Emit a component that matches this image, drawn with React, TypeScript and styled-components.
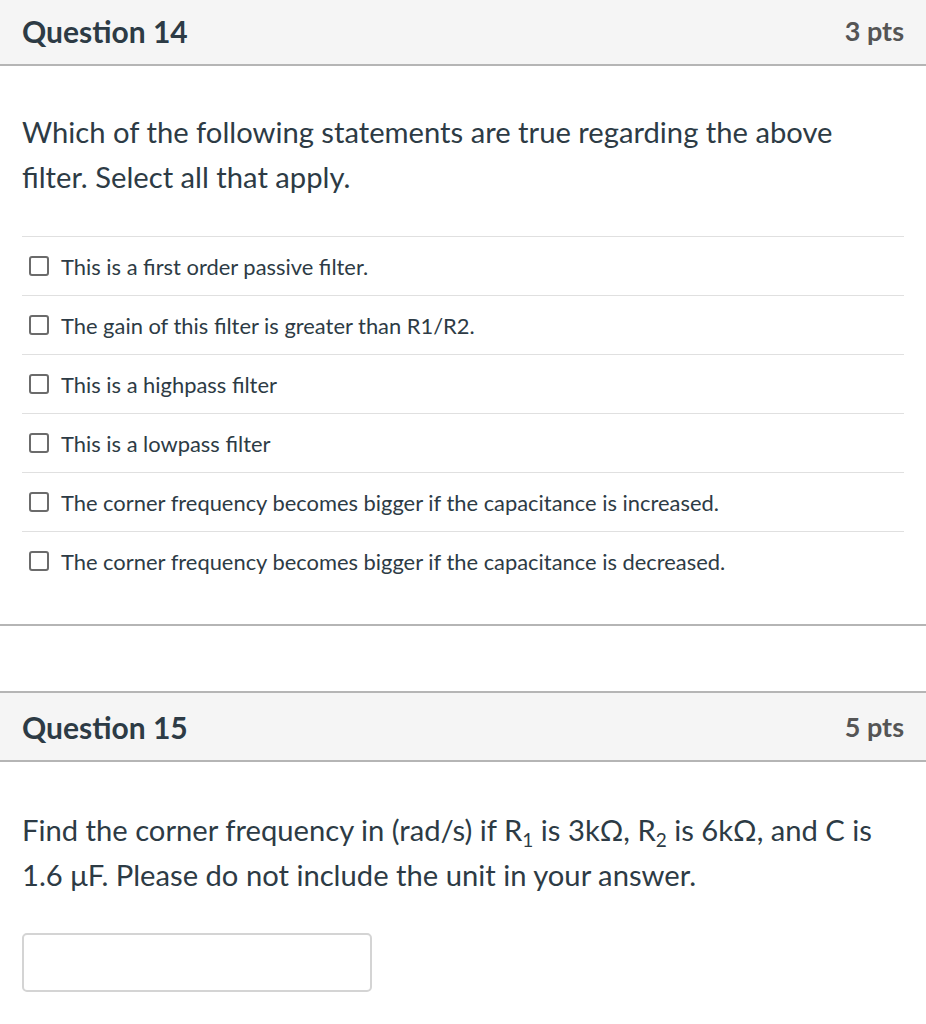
import React from "react";
import styled, { createGlobalStyle } from "styled-components";

const Global = createGlobalStyle`
  html, body { margin: 0; padding: 0; background: #fff; }
  body { font-family: Lato, "Open Sans", sans-serif; color: #2d3b45; overflow: hidden; }
`;

const Page = styled.div`
  margin-top: -3px;
  display: flex;
  flex-direction: column;
`;

const QuestionBox = styled.section<{ $gap?: number; $first?: boolean }>`
  margin-top: ${(p) => p.$gap ?? 0}px;
  border-top: ${(p) => (p.$first ? "none" : "2px solid #b5b5b5")};
  border-bottom: 2px solid #b5b5b5;
`;

const Header = styled.header`
  height: 69px;
  box-sizing: border-box;
  background: #f5f5f5;
  border-bottom: 2px solid #b5b5b5;
  display: flex;
  align-items: center;
  justify-content: space-between;
  padding: 0 22px;
`;

const Title = styled.h2`
  margin: 0;
  font-size: 30px;
  font-weight: 700;
  color: #2d3b45;
`;

const Points = styled.span`
  font-size: 27px;
  font-weight: 700;
  color: #555;
`;

const Body = styled.div<{ $top: number; $bottom: number }>`
  padding: ${(p) => p.$top}px 22px ${(p) => p.$bottom}px 22px;
`;

const Prompt = styled.p`
  margin: 0;
  font-size: 29.2px;
  line-height: 45px;
  color: #2d3b45;
`;

const Sub = styled.sub`
  font-size: 19px;
  vertical-align: -6px;
  line-height: 0;
`;

const Answers = styled.ul`
  list-style: none;
  margin: 37px 0 0;
  padding: 0;
`;

const Row = styled.li`
  height: 59px;
  box-sizing: border-box;
  border-top: 1px solid #e0e0e0;
  display: flex;
  align-items: center;
  gap: 12px;
  padding-left: 7px;
`;

const Box = styled.span`
  width: 20px;
  height: 20px;
  box-sizing: border-box;
  border: 2px solid #6b6b6b;
  border-radius: 3px;
  flex: none;
`;

const AnswerText = styled.span`
  font-size: 21.9px;
  color: #2d3b45;
`;

const Input = styled.div`
  margin-top: 36px;
  width: 350px;
  height: 59px;
  box-sizing: border-box;
  border: 2px solid #d4d4d4;
  border-radius: 5px;
  background: #fff;
`;

const answers = [
  "This is a first order passive filter.",
  "The gain of this filter is greater than R1/R2.",
  "This is a highpass filter",
  "This is a lowpass filter",
  "The corner frequency becomes bigger if the capacitance is increased.",
  "The corner frequency becomes bigger if the capacitance is decreased.",
];

export default function App() {
  return (
    <>
      <Global />
      <Page>
        <QuestionBox $first>
          <Header>
            <Title>Question 14</Title>
            <Points>3 pts</Points>
          </Header>
          <Body $top={43} $bottom={34}>
            <Prompt>
              Which of the following statements are true regarding the above
              filter. Select all that apply.
            </Prompt>
            <Answers>
              {answers.map((a) => (
                <Row key={a}>
                  <Box />
                  <AnswerText>{a}</AnswerText>
                </Row>
              ))}
            </Answers>
          </Body>
        </QuestionBox>
        <QuestionBox $gap={65}>
          <Header>
            <Title>Question 15</Title>
            <Points>5 pts</Points>
          </Header>
          <Body $top={45} $bottom={40}>
            <Prompt>
              Find the corner frequency in (rad/s) if R<Sub>1</Sub> is 3kΩ, R
              <Sub>2</Sub> is 6kΩ, and C is 1.6 μF. Please do not include the
              unit in your answer.
            </Prompt>
            <Input />
          </Body>
        </QuestionBox>
      </Page>
    </>
  );
}
